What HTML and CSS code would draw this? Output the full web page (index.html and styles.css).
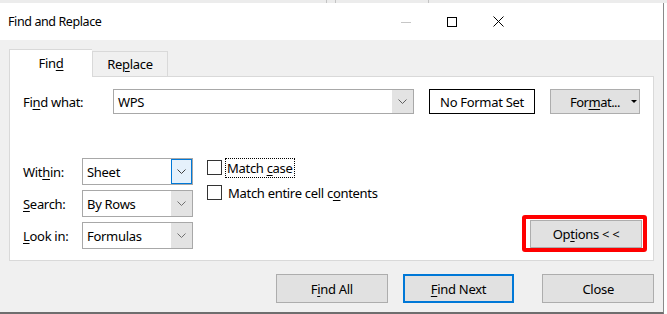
FILE: index.html
```html
<!DOCTYPE html>
<html>
<head>
<meta charset="utf-8">
<title>Find and Replace</title>
<link rel="stylesheet" href="styles.css">
</head>
<body>
<div class="strip"></div>
<div class="window">
  <div class="titlebar">
    <span class="title">Find and Replace</span>
    <div class="caps">
      <span class="cap"><svg width="10" height="10" viewBox="0 0 10 10"><line x1="0" y1="5.5" x2="10" y2="5.5" stroke="#c6c6c6" stroke-width="1"/></svg></span>
      <span class="cap"><svg width="10" height="10" viewBox="0 0 10 10"><rect x="0.5" y="0.5" width="9" height="9" fill="none" stroke="#000" stroke-width="1"/></svg></span>
      <span class="cap"><svg width="11" height="11" viewBox="0 0 11 11"><path d="M0.5 0.5 L10.5 10.5 M10.5 0.5 L0.5 10.5" stroke="#000" stroke-width="1"/></svg></span>
    </div>
  </div>
  <div class="client">
    <div class="tabs">
      <div class="tab active">Fin<u>d</u></div>
      <div class="tab">Re<u>p</u>lace</div>
    </div>
    <div class="panel">
      <div class="row1">
        <span class="lbl-what">Fi<u>n</u>d what:</span>
        <div class="combo what"><span class="val">WPS</span><span class="drop"><svg width="9" height="5" viewBox="0 0 9 5"><polyline points="0.5,0.5 4.5,4.5 8.5,0.5" fill="none" stroke="#606060" stroke-width="1"/></svg></span></div>
        <div class="fmtbox">No Format Set</div>
        <div class="btn fmtbtn"><span class="fmttext">For<u>m</u>at...</span><span class="caret"></span></div>
      </div>
      <div class="lower">
        <div class="selgrid">
          <span class="lbl">Wit<u>h</u>in:</span>
          <div class="combo sel"><span class="val">Sheet</span><span class="drop focus"><svg width="9" height="5" viewBox="0 0 9 5"><polyline points="0.5,0.5 4.5,4.5 8.5,0.5" fill="none" stroke="#404040" stroke-width="1"/></svg></span></div>
          <span class="lbl"><u>S</u>earch:</span>
          <div class="combo sel"><span class="val">By Rows</span><span class="drop"><svg width="9" height="5" viewBox="0 0 9 5"><polyline points="0.5,0.5 4.5,4.5 8.5,0.5" fill="none" stroke="#707070" stroke-width="1"/></svg></span></div>
          <span class="lbl"><u>L</u>ook in:</span>
          <div class="combo sel"><span class="val">Formulas</span><span class="drop"><svg width="9" height="5" viewBox="0 0 9 5"><polyline points="0.5,0.5 4.5,4.5 8.5,0.5" fill="none" stroke="#707070" stroke-width="1"/></svg></span></div>
        </div>
        <div class="checks">
          <div class="chk"><span class="box"></span><span class="ctext focusring">Match <u>c</u>ase</span></div>
          <div class="chk"><span class="box"></span><span class="ctext">Match entire cell c<u>o</u>ntents</span></div>
        </div>
        <div class="highlight"><div class="btn opt">Op<u>t</u>ions &lt; &lt;</div></div>
      </div>
    </div>
    <div class="actions">
      <div class="btn act">F<u>i</u>nd All</div>
      <div class="btn act default"><u>F</u>ind Next</div>
      <div class="btn act close">Close</div>
    </div>
  </div>
</div>
</body>
</html>
```

FILE: styles.css
```css
* { box-sizing: border-box; }
html, body { margin: 0; padding: 0; }
body {
  width: 667px;
  height: 314px;
  overflow: hidden;
  background: #ffffff;
  font-family: "Noto Sans", "Open Sans", sans-serif;
  font-size: 13px;
  letter-spacing: -0.3px;
  color: #000;
}
u { text-decoration: underline; text-underline-offset: 2px; text-decoration-thickness: 1px; }

.strip {
  height: 3px;
  background:
    linear-gradient(#c4c4c4, #c4c4c4) 326px 0 / 1px 3px no-repeat,
    linear-gradient(#c4c4c4, #c4c4c4) 335px 0 / 1px 3px no-repeat,
    linear-gradient(#c4c4c4, #c4c4c4) 428px 0 / 1px 3px no-repeat,
    #ececec;
}
.window {
  width: 664px;
  height: 311px;
  border-right: 1px solid #8a8a8a;
  border-bottom: 2px solid #6e6e6e;
  display: flex;
  flex-direction: column;
}
.titlebar {
  height: 37px;
  flex: none;
  background: #fff;
  display: flex;
  align-items: center;
  padding-left: 8px;
}
.title { flex: 1; font-size: 12.5px; letter-spacing: -0.4px; padding-bottom: 1px; }
.caps { display: flex; margin-right: 142px; }
.cap { width: 46px; height: 37px; display: flex; align-items: center; justify-content: center; }

.client {
  flex: 1;
  background: #f0f0f0;
  padding: 9px 9px 0 9px;
  display: flex;
  flex-direction: column;
}
.tabs { display: flex; align-items: flex-end; height: 27px; }
.tab {
  width: 76px;
  height: 25px;
  border: 1px solid #d9d9d9;
  border-bottom: none;
  background: #f0f0f0;
  display: flex;
  align-items: center;
  justify-content: center;
  padding-bottom: 1px;
}
.tab.active {
  width: 83px;
  height: 28px;
  background: #fff;
  margin-bottom: -1px;
  position: relative;
  z-index: 1;
  padding-bottom: 2px;
  border-right: none;
}
.panel {
  height: 185px;
  background: #fff;
  border: 1px solid #d9d9d9;
  padding: 12px 6px 8px 13px;
  display: flex;
  flex-direction: column;
}
.row1 { display: flex; align-items: center; height: 25px; }
.lbl-what { width: 90px; }
.combo {
  display: flex;
  align-items: stretch;
  background: #fff;
  border: 1px solid #a8a8a8;
}
.combo .val { flex: 1; display: flex; align-items: center; padding-left: 4px; }
.drop {
  width: 21px;
  background: #e3e3e3;
  display: flex;
  align-items: center;
  justify-content: center;
}
.drop.focus { background: #e5f1fb; outline: 1px solid #0078d7; outline-offset: -1px; }
.combo.what { width: 301px; height: 25px; }
.fmtbox {
  width: 106px;
  height: 25px;
  margin-left: 15px;
  border: 1px solid #000;
  display: flex;
  align-items: center;
  justify-content: center;
}
.btn {
  background: #e1e1e1;
  border: 1px solid #adadad;
  display: flex;
  align-items: center;
  justify-content: center;
}
.fmtbtn {
  width: 90px;
  height: 25px;
  margin-left: 15px;
  justify-content: flex-start;
  padding-left: 19px;
  padding-right: 2px;
}
.fmttext { letter-spacing: -0.5px; }
.caret {
  flex: none;
  margin-left: auto;
  width: 0;
  height: 0;
  border-left: 3px solid transparent;
  border-right: 3px solid transparent;
  border-top: 3px solid #000;
}

.lower {
  margin-top: 44px;
  flex: 1;
  display: flex;
}
.selgrid {
  display: grid;
  grid-template-columns: 59px 111px;
  grid-auto-rows: 27px;
  row-gap: 5px;
  align-self: flex-start;
}
.lbl { display: flex; align-items: center; }
.combo.sel { height: 27px; }
.checks {
  margin-left: 14px;
  padding-top: 2px;
  display: flex;
  flex-direction: column;
  gap: 10px;
}
.chk { display: flex; align-items: center; height: 15px; }
.box {
  width: 15px;
  height: 15px;
  border: 1px solid #333;
  background: #fff;
}
.ctext { margin-left: 6px; line-height: 18px; }
.focusring { outline: 1px dotted #000; outline-offset: 0; padding: 0 1px; margin-left: 4px; }

.highlight {
  margin-left: auto;
  align-self: flex-end;
  border: 4px solid #ff0000;
  border-radius: 3px;
  padding: 1px 1px 0 4px;
}
.opt { width: 112px; height: 28px; }

.actions {
  display: flex;
  margin-top: 13px;
  padding-left: 267px;
}
.act { width: 112px; height: 29px; }
.act + .act { margin-left: 15px; }
.act.close { margin-left: 28px; }
.default { border: 2px solid #0078d7; }
```
